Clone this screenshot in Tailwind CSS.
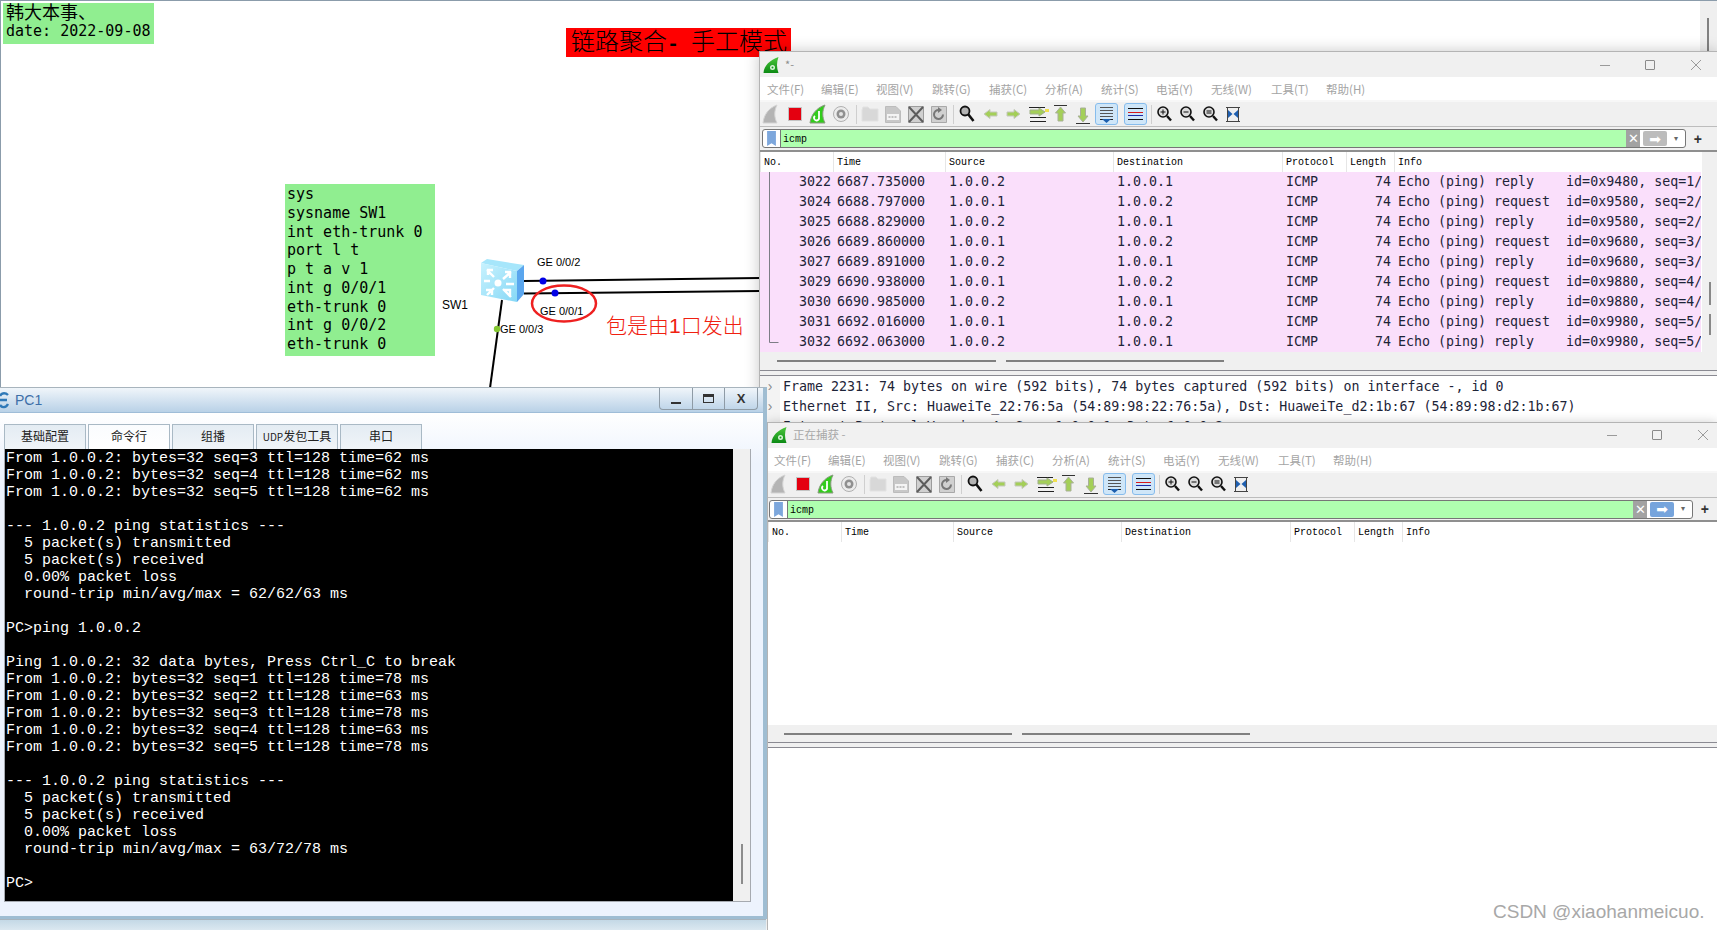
<!DOCTYPE html>
<html lang="zh">
<head>
<meta charset="utf-8">
<title>链路聚合</title>
<script src="https://cdn.jsdelivr.net/npm/@tailwindcss/browser@4"></script>
</head>
<body class="bg-white">
<svg width="0" height="0" class="absolute">
  <defs>
    <linearGradient id="fin" x1="0" y1="0" x2="0" y2="1"><stop offset="0" stop-color="#4cc83c"/><stop offset="1" stop-color="#0c8a14"/></linearGradient>
    <linearGradient id="face" x1="0" y1="0" x2="1" y2="1"><stop offset="0" stop-color="#c8f2fe"/><stop offset="1" stop-color="#86d8f6"/></linearGradient>
  </defs>
  <symbol id="logo" viewBox="0 0 16 16">
    <path d="M0.5 16C1 8.500 7 3 15.500 0C13.500 5 13.500 11 15.500 16Z" fill="url(#fin)"/>
    <circle cx="9.500" cy="10.500" r="2.500" fill="#d8f5d8"/>
    <circle cx="9.500" cy="10.500" r="1" fill="#1a9a20"/>
  </symbol>
  <symbol id="wincontrols" viewBox="0 0 102 12">
    <path d="M0 6.500H10" stroke="#9a9a9a" fill="none"/>
    <rect x="45.500" y="1.500" width="9" height="9" rx="0.500" stroke="#8a8a8a" fill="none"/>
    <path d="M91 1L101 11M101 1L91 11" stroke="#9a9a9a" fill="none"/>
  </symbol>
  <symbol id="toolbar" viewBox="0 0 484 24">
    <path d="M3 21C4 12 9 6 17 3C14 9 14 15 17 21Z" fill="#b4b4b4" stroke="#d4d4d4"/>
    <rect x="28.500" y="5.500" width="13" height="13" fill="#e40010" stroke="#c4c4c4"/>
    <path d="M50 21C51 13 56 6 65 3C62 9 62 15 65 21Z" fill="#32cc1c" stroke="#8a9a80"/>
    <path d="M59 9V15.500A2.500 2.500 0 1 1 55 14" stroke="#fff" stroke-width="1.800" fill="none"/>
    <circle cx="81" cy="12" r="7.500" fill="#ececec" stroke="#b0b0b0"/>
    <circle cx="81" cy="12" r="4.500" fill="#909090"/>
    <circle cx="81" cy="12" r="2" fill="#e4e4e4"/>
    <path d="M96.500 3V22" stroke="#cfcfcf"/>
    <path d="M102 8V19H118V7H110L108 5H103Z" fill="#d8d8d8" stroke="#e2e2e2"/>
    <path d="M125.500 4.500H136L140.500 9V20.500H125.500Z" fill="#c8c8c8" stroke="#bcbcbc"/>
    <rect x="127" y="12" width="12" height="6" fill="#f4f4f4"/>
    <path d="M128.500 15H137" stroke="#8c8c8c" stroke-dasharray="2 1"/>
    <path d="M148.500 4.500H163.500V20.500H148.500Z" fill="#d0d0d0" stroke="#9c9c9c"/>
    <path d="M149 5L163 20M163 5L149 20" stroke="#5c5c5c" stroke-width="2"/>
    <path d="M171.500 4.500H186.500V20.500H171.500Z" fill="#d0d0d0" stroke="#a8a8a8"/>
    <path d="M183 12.500A4.500 4.500 0 1 1 179 8" stroke="#777" stroke-width="2" fill="none"/>
    <path d="M178 5L182 8L178 11Z" fill="#777"/>
    <path d="M193.500 3V22" stroke="#cfcfcf"/>
    <circle cx="205" cy="9" r="4.500" fill="#b4b4b4" stroke="#111" stroke-width="1.800"/>
    <path d="M208 12L213.500 19" stroke="#111" stroke-width="2.600"/>
    <path d="M224 12L230 7.500V10H237V14H230V16.500Z" fill="#a4cf58" stroke="#c4c8bc"/>
    <path d="M260 12L254 7.500V10H247V14H254V16.500Z" fill="#a4cf58" stroke="#c4c8bc"/>
    <path d="M269 5.500H285M270 19.500H286M270 15.500H286" stroke="#222"/>
    <path d="M270 8H279V6L285 10L279 14V12H270Z" fill="#a4cf58" stroke="#a0b088"/>
    <path d="M285 7H289V10H285Z" fill="#f0e050"/>
    <path d="M294 3.500H307" stroke="#333"/>
    <path d="M300.500 5L305.500 11H303V19H298V11H295.500Z" fill="#a4cf58" stroke="#a8b098"/>
    <path d="M316 21.500H330" stroke="#333"/>
    <path d="M323 20L328 14H325.500V6H320.500V14H318Z" fill="#a4cf58" stroke="#a8b098"/>
    <rect x="335.500" y="1.500" width="22" height="21" rx="2.500" fill="#cfe6f8" stroke="#86bcec"/>
    <path d="M340 5.500H353M340 8.500H353M340 11.500H353M340 14.500H353" stroke="#555"/>
    <path d="M340 17.500H353" stroke="#222"/>
    <path d="M342 17H351L346.500 21Z" fill="#1d5fae"/>
    <rect x="364.500" y="1.500" width="22" height="21" rx="2.500" fill="#cfe6f8" stroke="#86bcec"/>
    <path d="M368 6.500H383M368 17.500H383" stroke="#111"/>
    <path d="M368 10.500H383" stroke="#d81818"/>
    <path d="M368 13.500H383" stroke="#1e2aa8"/>
    <path d="M391.500 3V22" stroke="#cfcfcf"/>
    <circle cx="403" cy="10" r="5" fill="#dcdcdc" stroke="#111" stroke-width="1.600"/>
    <path d="M400.500 10H405.500M403 7.500V12.500" stroke="#111"/>
    <path d="M407 14L411 18.500" stroke="#111" stroke-width="2.400"/>
    <circle cx="426" cy="10" r="5" fill="#dcdcdc" stroke="#111" stroke-width="1.600"/>
    <path d="M423.500 10H428.500" stroke="#111"/>
    <path d="M430 14L434 18.500" stroke="#111" stroke-width="2.400"/>
    <circle cx="449" cy="10" r="5" fill="#dcdcdc" stroke="#111" stroke-width="1.600"/>
    <path d="M446.500 9H451.500M446.500 11H451.500" stroke="#111"/>
    <path d="M453 14L457 18.500" stroke="#111" stroke-width="2.400"/>
    <path d="M467.500 5V20M478.500 5V20M466 5.500H480M466 19.500H480" stroke="#444"/>
    <path d="M468 8L472.500 12L468 16ZM478 8L473.500 12L478 16Z" fill="#1f5fb0"/>
  </symbol>
  <symbol id="bookmark" viewBox="0 0 10 17">
    <path d="M0 0H10V17L5 14L0 17Z" fill="#7da7dc"/>
  </symbol>
</svg>

<main class="relative w-[1717px] h-[930px] overflow-hidden font-['Noto_Sans_CJK_SC',sans-serif]">

  <!-- topology canvas -->
  <section class="absolute left-0 top-0 w-[1717px] h-[388px] bg-white border-t border-l border-[#8b9cab]">
    <div class="absolute left-[2px] top-[2px] w-[151px] h-[41px] bg-[#90ee90] pl-[3px] font-['DejaVu_Sans_Mono','Noto_Sans_CJK_SC',monospace] text-black">
      <p class="text-[18px] leading-[19px]">韩大本事、</p>
      <p class="text-[15px] leading-[18px]">date: 2022-09-08</p>
    </div>
    <div class="absolute left-[565px] top-[27px] w-[225px] h-[29px] bg-[#ff0000] pl-[5px] text-[24px] leading-[24px] text-black font-light whitespace-pre">链路聚合<span class="text-[20px] font-bold font-['Liberation_Mono']">- </span>手工模式</div>
    <div class="absolute left-[284px] top-[183px] w-[150px] h-[172px] bg-[#90ee90] pl-[2px] pt-[1px] font-['DejaVu_Sans_Mono',monospace] text-[15px] leading-[18.75px] text-black whitespace-pre"><p>sys</p><p>sysname SW1</p><p>int eth-trunk 0</p><p>port l t</p><p>p t a v 1</p><p>int g 0/0/1</p><p>eth-trunk 0</p><p>int g 0/0/2</p><p>eth-trunk 0</p></div>

    <svg class="absolute -left-px -top-px" width="770" height="390" viewBox="0 0 770 390">
      <path d="M524 281L760 278M524 293.500L760 291" stroke="#000" stroke-width="2" fill="none"/>
      <path d="M502 300L490 388" stroke="#000" stroke-width="2" fill="none"/>
      <path d="M481 263L487 259L524 265L517 271Z" fill="#a6e6fb"/>
      <path d="M517 271L524 265V294L517 302Z" fill="#5aa6ee"/>
      <path d="M481 263L517 271V302L481 295Z" fill="url(#face)"/>
      <g stroke="#fff" stroke-width="2.400" fill="none">
        <path d="M487 270L494 277M488 275V270H493"/>
        <path d="M511 272L503 279M510 278V272H505"/>
        <path d="M487 295L494 288M486 290H492V295"/>
        <path d="M511 297L503 289M504 290H510V296" />
        <path d="M484 281H490M506 284H514"/>
      </g>
      <circle cx="498" cy="283" r="3.500" fill="#fff"/>
      <circle cx="543" cy="281" r="3.500" fill="#0000e6"/>
      <circle cx="555" cy="293" r="3.500" fill="#0000e6"/>
      <circle cx="497" cy="329" r="3.200" fill="#84c832"/>
      <ellipse cx="564" cy="303.500" rx="32" ry="18" fill="none" stroke="#ee2020" stroke-width="2.500"/>
    </svg>
    <span class="absolute left-[536px] top-[254px] text-[11px] leading-[14px] font-['Liberation_Sans'] text-black">GE 0/0/2</span>
    <span class="absolute left-[539px] top-[303px] text-[11px] leading-[14px] font-['Liberation_Sans'] text-black">GE 0/0/1</span>
    <span class="absolute left-[499px] top-[321px] text-[11px] leading-[14px] font-['Liberation_Sans'] text-black">GE 0/0/3</span>
    <span class="absolute left-[441px] top-[297px] text-[12px] leading-[14px] font-['Liberation_Sans'] text-black">SW1</span>
    <span class="absolute left-[605px] top-[311px] text-[21px] leading-[28px] font-light text-[#f02010] whitespace-pre font-['Liberation_Sans','Noto_Sans_CJK_SC']">包是由1口发出</span>

    <div class="absolute left-[1699px] top-0 w-[18px] h-[52px] bg-[#efefef]">
      <div class="ml-[7px] mt-[17px] w-[2px] h-[35px] bg-[#808080]"></div>
    </div>
  </section>

  <!-- Wireshark window 1 -->
  <section class="absolute left-[759px] top-[51px] w-[958px] h-[390px] bg-white border-t border-l border-[#b4b4b4] shadow-[0_0_14px_rgba(0,0,0,0.22)] flex flex-col">
    <header class="h-[25px] shrink-0 bg-[#f0f0f0] flex items-center pl-[3px] pr-[15px]">
      <svg class="w-4 h-4"><use href="#logo"/></svg>
      <span class="ml-[6px] text-[11px] text-[#8c8c8c]">*-</span>
      <svg class="ml-auto w-[102px] h-3"><use href="#wincontrols"/></svg>
    </header>
    <nav class="h-[23px] shrink-0 bg-white flex items-center pt-[2px] pl-[7px] text-[11.5px] text-[#a4a4a4] whitespace-nowrap">
      <span class="w-[54px]">文件(F)</span><span class="w-[55px]">编辑(E)</span><span class="w-[56px]">视图(V)</span><span class="w-[57px]">跳转(G)</span><span class="w-[56px]">捕获(C)</span><span class="w-[56px]">分析(A)</span><span class="w-[55px]">统计(S)</span><span class="w-[55px]">电话(Y)</span><span class="w-[60px]">无线(W)</span><span class="w-[55px]">工具(T)</span><span>帮助(H)</span>
    </nav>
    <div class="h-[27px] shrink-0 bg-[#f0f0f0] border-t-2 border-[#f7f7f7] border-b border-b-[#bdbdbd]">
      <svg class="w-[484px] h-6"><use href="#toolbar"/></svg>
    </div>
    <div class="h-[25px] shrink-0 bg-[#f0f0f0] border-b-2 border-[#8f8f8f] flex items-center pl-[2px] pr-[15px]">
      <div class="w-[924px] h-[19px] flex items-stretch border border-[#767676] rounded-[3px] bg-white overflow-hidden">
        <div class="w-[18px] flex items-center justify-center border-r border-[#767676]"><svg class="w-[9px] h-[15px]"><use href="#bookmark"/></svg></div>
        <div class="w-[845px] bg-[#afffaf] pl-[2px] font-['Liberation_Mono'] text-[10px] leading-[20px] text-black">icmp</div>
        <div class="w-[14px] bg-[#a2a2a2] flex items-center justify-center text-white text-[13px] leading-none font-['Liberation_Sans']">✕</div>
        <div class="ml-[3px] w-[24px] my-px bg-[#bcbcbc] rounded-[2px] flex items-center justify-center text-white text-[14px] leading-none font-['DejaVu_Sans']">➡</div>
        <div class="flex-1 flex items-center justify-center text-[#666] text-[8px] leading-none font-['DejaVu_Sans']">▾</div>
      </div>
      <span class="ml-auto text-[14px] leading-none font-bold text-[#333] font-['Liberation_Sans']">+</span>
    </div>
    <div class="h-[218px] shrink-0 relative flex">
      <div class="w-[941px] font-['DejaVu_Sans_Mono',monospace] text-[13.3px] text-[#1d2438] overflow-hidden">
        <div class="h-5 grid grid-cols-[73px_112px_168px_169px_64px_48px_1fr] font-['Liberation_Mono'] text-[10px] leading-[18px] text-black *:pl-[3px] *:pt-[2px] *:border-l *:border-[#e6e6e6]">
          <span class="border-l-0">No.</span><span>Time</span><span>Source</span><span>Destination</span><span>Protocol</span><span>Length</span><span>Info</span>
        </div>
        <div class="bg-[#fadffb]">
          <div class="h-5 leading-[20px] grid grid-cols-[73px_112px_168px_169px_64px_48px_1fr] *:pl-1 *:whitespace-pre"><span class="text-right pr-[2px]">3022</span><span>6687.735000</span><span>1.0.0.2</span><span>1.0.0.1</span><span>ICMP</span><span class="text-right pr-[3px]">74</span><span>Echo (ping) reply    id=0x9480, seq=1/</span></div>
          <div class="h-5 leading-[20px] grid grid-cols-[73px_112px_168px_169px_64px_48px_1fr] *:pl-1 *:whitespace-pre"><span class="text-right pr-[2px]">3024</span><span>6688.797000</span><span>1.0.0.1</span><span>1.0.0.2</span><span>ICMP</span><span class="text-right pr-[3px]">74</span><span>Echo (ping) request  id=0x9580, seq=2/</span></div>
          <div class="h-5 leading-[20px] grid grid-cols-[73px_112px_168px_169px_64px_48px_1fr] *:pl-1 *:whitespace-pre"><span class="text-right pr-[2px]">3025</span><span>6688.829000</span><span>1.0.0.2</span><span>1.0.0.1</span><span>ICMP</span><span class="text-right pr-[3px]">74</span><span>Echo (ping) reply    id=0x9580, seq=2/</span></div>
          <div class="h-5 leading-[20px] grid grid-cols-[73px_112px_168px_169px_64px_48px_1fr] *:pl-1 *:whitespace-pre"><span class="text-right pr-[2px]">3026</span><span>6689.860000</span><span>1.0.0.1</span><span>1.0.0.2</span><span>ICMP</span><span class="text-right pr-[3px]">74</span><span>Echo (ping) request  id=0x9680, seq=3/</span></div>
          <div class="h-5 leading-[20px] grid grid-cols-[73px_112px_168px_169px_64px_48px_1fr] *:pl-1 *:whitespace-pre"><span class="text-right pr-[2px]">3027</span><span>6689.891000</span><span>1.0.0.2</span><span>1.0.0.1</span><span>ICMP</span><span class="text-right pr-[3px]">74</span><span>Echo (ping) reply    id=0x9680, seq=3/</span></div>
          <div class="h-5 leading-[20px] grid grid-cols-[73px_112px_168px_169px_64px_48px_1fr] *:pl-1 *:whitespace-pre"><span class="text-right pr-[2px]">3029</span><span>6690.938000</span><span>1.0.0.1</span><span>1.0.0.2</span><span>ICMP</span><span class="text-right pr-[3px]">74</span><span>Echo (ping) request  id=0x9880, seq=4/</span></div>
          <div class="h-5 leading-[20px] grid grid-cols-[73px_112px_168px_169px_64px_48px_1fr] *:pl-1 *:whitespace-pre"><span class="text-right pr-[2px]">3030</span><span>6690.985000</span><span>1.0.0.2</span><span>1.0.0.1</span><span>ICMP</span><span class="text-right pr-[3px]">74</span><span>Echo (ping) reply    id=0x9880, seq=4/</span></div>
          <div class="h-5 leading-[20px] grid grid-cols-[73px_112px_168px_169px_64px_48px_1fr] *:pl-1 *:whitespace-pre"><span class="text-right pr-[2px]">3031</span><span>6692.016000</span><span>1.0.0.1</span><span>1.0.0.2</span><span>ICMP</span><span class="text-right pr-[3px]">74</span><span>Echo (ping) request  id=0x9980, seq=5/</span></div>
          <div class="h-5 leading-[20px] grid grid-cols-[73px_112px_168px_169px_64px_48px_1fr] *:pl-1 *:whitespace-pre"><span class="text-right pr-[2px]">3032</span><span>6692.063000</span><span>1.0.0.2</span><span>1.0.0.1</span><span>ICMP</span><span class="text-right pr-[3px]">74</span><span>Echo (ping) reply    id=0x9980, seq=5/</span></div>
        </div>
      </div>
      <svg class="absolute left-[8px] top-[20px]" width="12" height="172"><path d="M1.500 0V170.500H10.500" stroke="#7d7d86" fill="none"/></svg>
      <div class="flex-1 bg-[#f0f0f0] ml-px relative">
        <div class="absolute left-[7px] top-[130px] w-[2px] h-[23px] bg-[#888]"></div>
        <div class="absolute left-[7px] top-[162px] w-[2px] h-[21px] bg-[#888]"></div>
      </div>
      <div class="absolute left-0 right-0 top-[200px] h-[18px] bg-[#f0f0f0] flex items-center pl-[17px] gap-[10px]">
        <div class="w-[219px] h-[2px] bg-[#808080]"></div><div class="w-[218px] h-[2px] bg-[#808080]"></div>
      </div>
    </div>
    <div class="h-[6px] shrink-0 bg-[#f0f0f0] border-y border-[#8a8a92]"></div>
    <div class="flex-1 flex font-['DejaVu_Sans_Mono',monospace] text-[13.3px] leading-[20px] text-[#1d2438] overflow-hidden">
      <div class="w-5 shrink-0 bg-[#f3f3f3] text-[#888] text-center font-['Liberation_Sans'] text-[14px]"><p>›</p><p>›</p></div>
      <div class="pl-[3px] pt-px whitespace-nowrap">
        <p>Frame 2231: 74 bytes on wire (592 bits), 74 bytes captured (592 bits) on interface -, id 0</p>
        <p>Ethernet II, Src: HuaweiTe_22:76:5a (54:89:98:22:76:5a), Dst: HuaweiTe_d2:1b:67 (54:89:98:d2:1b:67)</p>
        <p>Internet Protocol Version 4, Src: 1.0.0.1, Dst: 1.0.0.2</p>
      </div>
    </div>
  </section>

  <!-- Wireshark window 2 -->
  <section class="absolute left-[767px] top-[422px] w-[950px] h-[508px] bg-white border-t border-l border-[#b4b4b4] shadow-[0_0_10px_rgba(0,0,0,0.18)] flex flex-col">
    <header class="h-[25px] shrink-0 bg-[#f1f1f1] flex items-center pb-[2px] pl-[3px] pr-[8px]">
      <svg class="w-4 h-4"><use href="#logo"/></svg>
      <span class="ml-[6px] text-[11.5px] text-[#a8a8a8]">正在捕获 -</span>
      <svg class="ml-auto w-[102px] h-3"><use href="#wincontrols"/></svg>
    </header>
    <nav class="h-[23px] shrink-0 bg-white flex items-center pt-[2px] pl-[6px] text-[11.5px] text-[#a4a4a4] whitespace-nowrap">
      <span class="w-[54px]">文件(F)</span><span class="w-[55px]">编辑(E)</span><span class="w-[56px]">视图(V)</span><span class="w-[57px]">跳转(G)</span><span class="w-[56px]">捕获(C)</span><span class="w-[56px]">分析(A)</span><span class="w-[55px]">统计(S)</span><span class="w-[55px]">电话(Y)</span><span class="w-[60px]">无线(W)</span><span class="w-[55px]">工具(T)</span><span>帮助(H)</span>
    </nav>
    <div class="h-[27px] shrink-0 bg-[#f0f0f0] border-t-2 border-[#f7f7f7] border-b border-b-[#bdbdbd]">
      <svg class="w-[484px] h-6 -mt-px"><use href="#toolbar"/></svg>
    </div>
    <div class="h-[24px] shrink-0 bg-[#f0f0f0] border-b-2 border-[#8f8f8f] flex items-center pl-[1px] pr-[8px]">
      <div class="w-[924px] h-[19px] flex items-stretch border border-[#767676] rounded-[3px] bg-white overflow-hidden">
        <div class="w-[18px] flex items-center justify-center border-r border-[#767676]"><svg class="w-[9px] h-[15px]"><use href="#bookmark"/></svg></div>
        <div class="w-[845px] bg-[#afffaf] pl-[2px] font-['Liberation_Mono'] text-[10px] leading-[20px] text-black">icmp</div>
        <div class="w-[14px] bg-[#a2a2a2] flex items-center justify-center text-white text-[13px] leading-none font-['Liberation_Sans']">✕</div>
        <div class="ml-[3px] w-[24px] my-px bg-[#76a4dc] rounded-[2px] flex items-center justify-center text-white text-[14px] leading-none font-['DejaVu_Sans']">➡</div>
        <div class="flex-1 flex items-center justify-center text-[#666] text-[8px] leading-none font-['DejaVu_Sans']">▾</div>
      </div>
      <span class="ml-auto text-[14px] leading-none font-bold text-[#333] font-['Liberation_Sans']">+</span>
    </div>
    <div class="h-[203px] shrink-0">
      <div class="h-5 grid grid-cols-[73px_112px_168px_169px_64px_48px_1fr] font-['Liberation_Mono'] text-[10px] leading-[18px] text-black *:pl-[3px] *:pt-[2px] *:border-l *:border-[#e6e6e6]">
        <span class="border-l-0">No.</span><span>Time</span><span>Source</span><span>Destination</span><span>Protocol</span><span>Length</span><span>Info</span>
      </div>
    </div>
    <div class="h-[17px] shrink-0 bg-[#f0f0f0] flex items-center pl-[16px] gap-[10px]">
      <div class="w-[228px] h-[2px] bg-[#808080]"></div><div class="w-[228px] h-[2px] bg-[#808080]"></div>
    </div>
    <div class="h-[6px] shrink-0 bg-[#f0f0f0] border-y border-[#8a8a92]"></div>
    <div class="flex-1 bg-white"></div>
  </section>

  <!-- PC1 console window -->
  <section class="absolute left-0 top-[387px] w-[767px] h-[532px] bg-[#edf3fd] border-t border-[#a8b4bd] border-r-4 border-r-[#9fbdd2] border-b-[3px] border-b-[#9fbdd2] flex flex-col">
    <header class="relative h-[25px] shrink-0 bg-gradient-to-b from-[#f0f5fa] to-[#b9d1e7] border-b border-[#9fbdd8] flex items-center">
      <svg width="12" height="18" viewBox="0 0 12 18" class="shrink-0 -ml-[1px]">
        <path d="M1 5C3 1 7 2 9 4M0 9H8M1 14C3 17 7 17 9 13" stroke="#2f79b8" stroke-width="2.400" fill="none"/>
      </svg>
      <span class="ml-[4px] text-[14px] leading-none text-[#3d6fa8] font-['Liberation_Sans']">PC1</span>
      <div class="ml-auto mr-[5px] self-start flex h-[22px] w-[99px] border border-t-0 border-[#8e9ba6] rounded-b-[4px] divide-x divide-[#8e9ba6]">
        <div class="flex-1 flex items-end justify-center pb-[5px]"><span class="w-[10px] h-[2px] bg-[#333]"></span></div>
        <div class="flex-1 flex items-center justify-center"><span class="w-[11px] h-[9px] border border-t-[3px] border-[#333]"></span></div>
        <div class="flex-1 flex items-center justify-center text-[13px] leading-none text-[#333] font-bold font-['Liberation_Sans']">X</div>
      </div>
    </header>
    <div class="flex-1 flex flex-col pl-[4px] pr-[12px] pb-[14px] bg-gradient-to-b from-white to-[#edf3fd] to-[10%]">
      <nav class="mt-[11px] h-[25px] shrink-0 flex gap-[2px] text-[12px] leading-[22px] text-[#222] text-center">
        <span class="w-[82px] border border-b-0 border-[#a9b9c5] bg-gradient-to-b from-[#e4ecf3] to-[#f0f4f8]">基础配置</span>
        <span class="w-[82px] border border-b-0 border-[#a9b9c5] bg-gradient-to-b from-[#fafcfe] to-white">命令行</span>
        <span class="w-[82px] border border-b-0 border-[#a9b9c5] bg-gradient-to-b from-[#e4ecf3] to-[#f0f4f8]">组播</span>
        <span class="w-[82px] border border-b-0 border-[#a9b9c5] bg-gradient-to-b from-[#e4ecf3] to-[#f0f4f8]"><span class="text-[10px]">UDP</span>发包工具</span>
        <span class="w-[82px] border border-b-0 border-[#a9b9c5] bg-gradient-to-b from-[#e4ecf3] to-[#f0f4f8]">串口</span>
      </nav>
      <div class="flex-1 flex border-r border-b border-l border-[#a6aab0] bg-[#f0f0f0]">
        <pre class="w-[728px] bg-black text-white pl-[1px] pt-[1px] font-['Liberation_Mono',monospace] text-[15px] leading-[17px] overflow-hidden">From 1.0.0.2: bytes=32 seq=3 ttl=128 time=62 ms
From 1.0.0.2: bytes=32 seq=4 ttl=128 time=62 ms
From 1.0.0.2: bytes=32 seq=5 ttl=128 time=62 ms

--- 1.0.0.2 ping statistics ---
  5 packet(s) transmitted
  5 packet(s) received
  0.00% packet loss
  round-trip min/avg/max = 62/62/63 ms

PC&gt;ping 1.0.0.2

Ping 1.0.0.2: 32 data bytes, Press Ctrl_C to break
From 1.0.0.2: bytes=32 seq=1 ttl=128 time=78 ms
From 1.0.0.2: bytes=32 seq=2 ttl=128 time=63 ms
From 1.0.0.2: bytes=32 seq=3 ttl=128 time=78 ms
From 1.0.0.2: bytes=32 seq=4 ttl=128 time=63 ms
From 1.0.0.2: bytes=32 seq=5 ttl=128 time=78 ms

--- 1.0.0.2 ping statistics ---
  5 packet(s) transmitted
  5 packet(s) received
  0.00% packet loss
  round-trip min/avg/max = 63/72/78 ms

PC&gt;</pre>
        <div class="flex-1 relative"><div class="absolute left-[8px] bottom-[17px] w-[2px] h-[40px] bg-[#8c8c8c]"></div></div>
      </div>
    </div>
  </section>
  <div class="absolute left-0 top-[919px] w-[766px] h-[11px] bg-gradient-to-b from-[#c4d9e6] to-[#dbe8f0] border-t border-[#a8b4bd]"></div>

  <p class="absolute left-[1493px] top-[901px] text-[19px] leading-[22px] text-[#a8a8a8] font-['Liberation_Sans'] whitespace-nowrap">CSDN @xiaohanmeicuo.</p>
</main>
</body>
</html>
